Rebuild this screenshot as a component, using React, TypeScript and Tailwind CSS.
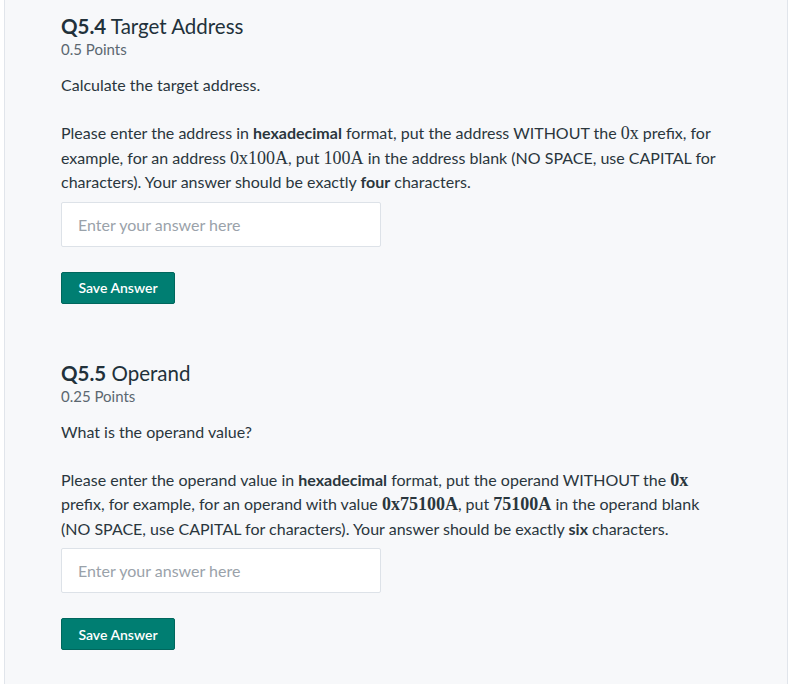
import React from 'react';

const sans = "font-['Lato','Open_Sans',sans-serif]";
const math = "font-['Liberation_Serif','DejaVu_Serif',serif] text-[18px] leading-none";

type Q = {
  num: string;
  title: string;
  points: string;
  prompt: string;
  body: React.ReactNode;
};

function Question({ q }: { q: Q }) {
  return (
    <div className="flex flex-col">
      <h2 className="text-[20.5px] leading-6 text-[#22313a]">
        <span className="font-bold">{q.num}</span> {q.title}
      </h2>
      <div className="text-[15px] leading-5 text-[#5b6770] mt-[1px]">{q.points}</div>
      <p className="text-[16px] leading-6 text-[#2a363d] mt-[14px]">{q.prompt}</p>
      <p className="text-[16px] leading-[24.5px] text-[#2a363d] mt-[24px] max-w-[660px]">{q.body}</p>
      <input
        type="text"
        placeholder="Enter your answer here"
        className="mt-[7px] w-[320px] h-[45px] bg-white border border-[#dde2e8] rounded-[2px] px-4 text-[16px] placeholder-[#9aa2aa] outline-none"
      />
      <div className="mt-[25px]">
        <button className="h-[32px] w-[114px] bg-[#007e72] border border-[#00675d] rounded-[2px] text-white text-[14px] font-semibold">
          Save Answer
        </button>
      </div>
    </div>
  );
}

export default function App() {
  const questions: Q[] = [
    {
      num: 'Q5.4',
      title: 'Target Address',
      points: '0.5 Points',
      prompt: 'Calculate the target address.',
      body: (
        <>
          Please enter the address in <b>hexadecimal</b> format, put the address WITHOUT the{' '}
          <span className={math}>0x</span> prefix, for example, for an address{' '}
          <span className={math}>0x100A</span>, put <span className={math}>100A</span> in the address blank (NO
          SPACE, use CAPITAL for characters). Your answer should be exactly <b>four</b> characters.
        </>
      ),
    },
    {
      num: 'Q5.5',
      title: 'Operand',
      points: '0.25 Points',
      prompt: 'What is the operand value?',
      body: (
        <>
          Please enter the operand value in <b>hexadecimal</b> format, put the operand WITHOUT the{' '}
          <span className={math + ' font-bold'}>0x</span> prefix, for example, for an operand with value{' '}
          <span className={math + ' font-bold'}>0x75100A</span>, put{' '}
          <span className={math + ' font-bold'}>75100A</span> in the operand blank (NO SPACE, use CAPITAL for
          characters). Your answer should be exactly <b>six</b> characters.
        </>
      ),
    },
  ];

  return (
    <div className={`${sans} min-h-screen bg-white`}>
      <div className="ml-[4px] w-[784px] min-h-[684px] bg-[#f7f8fa] border-l border-r border-[#e1e5eb] pl-[56px] pt-[14px] pb-[32px] flex flex-col gap-[57px]">
        {questions.map((q) => (
          <Question key={q.num} q={q} />
        ))}
      </div>
    </div>
  );
}
